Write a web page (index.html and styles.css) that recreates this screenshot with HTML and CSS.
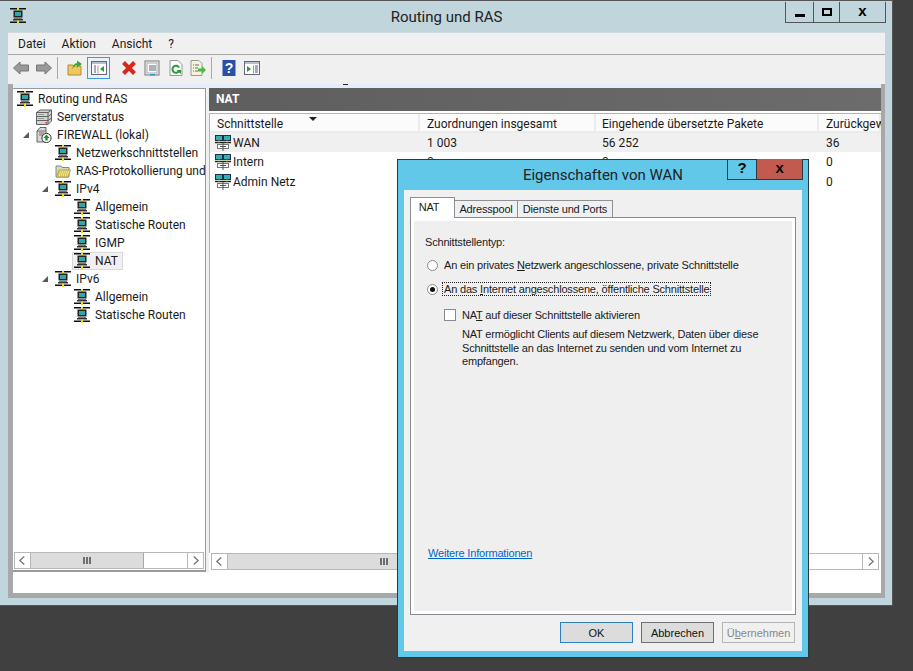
FILE: index.html
```html
<!DOCTYPE html>
<html lang="de">
<head>
<meta charset="utf-8">
<title>Routing und RAS</title>
<link rel="stylesheet" href="styles.css">
</head>
<body>
<svg class="defs" aria-hidden="true">
  <symbol id="net" viewBox="0 0 16 16">
    <rect x="0" y="0" width="16" height="1.500" fill="#111"/>
    <rect x="7" y="0" width="2" height="3" fill="#e8e020"/>
    <rect x="3.500" y="2.500" width="9" height="7" fill="#222"/>
    <rect x="5" y="4" width="6" height="4" fill="#2fa8a8"/>
    <rect x="4" y="10" width="8" height="1" fill="#777"/>
    <rect x="3" y="11" width="10" height="1.500" fill="#333"/>
    <rect x="0" y="13.500" width="16" height="1.500" fill="#111"/>
    <rect x="7" y="12.500" width="2" height="3.500" fill="#e8e020"/>
  </symbol>
  <symbol id="server" viewBox="0 0 16 16">
    <path d="M.5 3.500 4 1h11.500v11L12 15.500H.5z" fill="#d4d4d4" stroke="#555" stroke-width=".9"/>
    <path d="M.5 3.500h11.500l3.500-2.500M12 3.500v12M.5 7.500h11.500M.5 11.500h11.500M12 7.500l3.500-2.500M12 11.500l3.500-2.500" fill="none" stroke="#555" stroke-width=".9"/>
    <rect x="2" y="5" width="6" height="1" fill="#999"/><rect x="2" y="9" width="6" height="1" fill="#999"/>
    <rect x="9.500" y="13" width="1.500" height="1.500" fill="#c33"/>
  </symbol>
  <symbol id="fw" viewBox="0 0 16 16">
    <path d="M1 4 4 .5h6V15H1z" fill="#d8d8d8" stroke="#555" stroke-width=".9"/>
    <path d="M1 4h9M3 6h5M3 8h5" stroke="#555" stroke-width=".8" fill="none"/>
    <circle cx="10.500" cy="11" r="4.600" fill="#fff" stroke="#333"/>
    <path d="M10.500 7.500 13.500 11h-1.800v2.500H9.300V11H7.500z" fill="#1d8f2c"/>
  </symbol>
  <symbol id="folder" viewBox="0 0 16 16">
    <path d="M1 3h5l1 1.500h7V14H1z" fill="#d9d9c0" stroke="#8a8a70"/>
    <path d="M4 7h11.500L13 14H1.500z" fill="#f2e27a" stroke="#8f8f70" stroke-width=".8"/>
    <path d="M4 9h10M3 11h10M3 13h9" stroke="#b9a83a" stroke-dasharray="1 1"/>
  </symbol>
  <symbol id="nic" viewBox="0 0 16 16">
    <rect x=".5" y=".5" width="7" height="5" fill="#35b0b0" stroke="#1c2f4a"/>
    <rect x="8.500" y=".5" width="7" height="5" fill="#35b0b0" stroke="#1c2f4a"/>
    <path d="M0 7.500h16" stroke="#222" stroke-width="1.500"/>
    <path d="M4 5.500v2M12 5.500v2" stroke="#e8e020"/>
    <rect x="2.500" y="9.500" width="11" height="4" fill="#fff" stroke="#777"/>
    <path d="M8 8v8M5 11.500h6" stroke="#555"/>
  </symbol>
  <symbol id="back" viewBox="0 0 16 16">
    <path d="M0.500 8 7 2v3h8.500v6H7v3z" fill="#999" stroke="#777"/>
  </symbol>
  <symbol id="forward" viewBox="0 0 16 16">
    <path d="M15.500 8 9 2v3H.5v6H9v3z" fill="#999" stroke="#777"/>
  </symbol>
  <symbol id="up" viewBox="0 0 16 16">
    <path d="M1 5h5l1 1h7v9H1z" fill="#efc860" stroke="#b08a30"/>
    <path d="M5 9C6 5 8 3 10 3V.5L15 4l-5 3.500V5C8 5 7 7 5 9z" fill="#3aa63a"/>
  </symbol>
  <symbol id="pane-l" viewBox="0 0 16 16">
    <rect x=".5" y="1.500" width="15" height="13" fill="#fff" stroke="#667"/>
    <rect x="1" y="2" width="14" height="2" fill="#b5c0c8"/>
    <path d="M3 6h2M3 8h2M3 10h2M3 12h2" stroke="#557"/>
    <path d="M7 5.500v8" stroke="#99a"/>
    <path d="M13 6v6L9 9z" fill="#2c9a3c"/>
  </symbol>
  <symbol id="pane-r" viewBox="0 0 16 16">
    <rect x=".5" y="1.500" width="15" height="13" fill="#fff" stroke="#667"/>
    <rect x="1" y="2" width="14" height="2" fill="#b5c0c8"/>
    <path d="M11 6h3M11 8h3M11 10h3M11 12h3" stroke="#557"/>
    <path d="M9.500 5.500v8" stroke="#99a"/>
    <path d="M3 6v6l4-3z" fill="#2c9a3c"/>
  </symbol>
  <symbol id="del" viewBox="0 0 16 16">
    <path d="M2.500 2.500 13.500 13.500M13.500 2.500 2.500 13.500" stroke="#d9261c" stroke-width="4"/>
  </symbol>
  <symbol id="props" viewBox="0 0 16 16">
    <rect x="1" y="1" width="14" height="14" fill="#f4f4f4" stroke="#777"/>
    <rect x="3" y="3" width="10" height="10" fill="#fff" stroke="#aaa"/>
    <path d="M5 6h7M5 8h7M5 10h7" stroke="#567"/>
    <rect x="6" y="14" width="5" height="1.500" fill="#39c"/>
  </symbol>
  <symbol id="refresh" viewBox="0 0 16 16">
    <path d="M2 .5h8l4 4v11H2z" fill="#fafafa" stroke="#999"/>
    <path d="M11 7.500A3.500 3.500 0 1 0 11 11" fill="none" stroke="#2a9a3a" stroke-width="2"/>
    <path d="M8.500 10l4.500 0v4z" fill="#2a9a3a"/>
  </symbol>
  <symbol id="export" viewBox="0 0 16 16">
    <path d="M1 .5h8l3 3v12H1z" fill="#f7f3d8" stroke="#999"/>
    <path d="M3 5h1M5 5h4M3 8h1M5 8h3M3 11h1M5 11h3" stroke="#667"/>
    <path d="M8 8.500h4V6l4 4-4 4v-2.500H8z" fill="#4cb84c"/>
  </symbol>
  <symbol id="help" viewBox="0 0 16 16">
    <rect x="1.500" y="0" width="13" height="16" fill="#2a4fa8"/>
    <text x="8" y="13" text-anchor="middle" class="help-q">?</text>
  </symbol>
  <symbol id="left" viewBox="0 0 17 17">
    <path d="M10.500 4 5.500 8.500l5 4.500" fill="none" stroke="#777" stroke-width="1.500"/>
  </symbol>
  <symbol id="right" viewBox="0 0 17 17">
    <path d="M6.500 4l5 4.500-5 4.500" fill="none" stroke="#777" stroke-width="1.500"/>
  </symbol>
</svg>

<main class="window">
  <header class="titlebar">
    <svg class="ico title-ico"><use href="#net"/></svg>
    <h1 class="title">Routing und RAS</h1>
    <div class="caption">
      <span class="cap cap-min"><i class="glyph-min"></i></span>
      <span class="cap cap-max"><i class="glyph-max"></i></span>
      <span class="cap cap-close">x</span>
    </div>
  </header>
  <nav class="menu"><span>Datei</span><span>Aktion</span><span>Ansicht</span><span>?</span></nav>
  <div class="toolbar">
    <svg class="ico"><use href="#back"/></svg>
    <svg class="ico t-fwd"><use href="#forward"/></svg>
    <span class="sep"></span>
    <svg class="ico t-up"><use href="#up"/></svg>
    <span class="active"><svg class="ico"><use href="#pane-l"/></svg></span>
    <svg class="ico t-del"><use href="#del"/></svg>
    <svg class="ico t-props"><use href="#props"/></svg>
    <svg class="ico t-refresh"><use href="#refresh"/></svg>
    <svg class="ico t-export"><use href="#export"/></svg>
    <span class="sep sep2"></span>
    <svg class="ico t-help"><use href="#help"/></svg>
    <svg class="ico t-pane"><use href="#pane-r"/></svg>
  </div>
  <div class="frame">
    <div class="band"></div>
    <div class="panes">
      <section class="tree">
        <ul class="tree-list">
          <li class="node"><svg class="ico"><use href="#net"/></svg>Routing und RAS</li>
          <li class="node l1"><svg class="ico"><use href="#server"/></svg>Serverstatus</li>
          <li class="node l1 open"><svg class="ico"><use href="#fw"/></svg>FIREWALL (lokal)</li>
          <li class="node l2"><svg class="ico"><use href="#net"/></svg>Netzwerkschnittstellen</li>
          <li class="node l2"><svg class="ico"><use href="#folder"/></svg>RAS-Protokollierung und</li>
          <li class="node l2 open"><svg class="ico"><use href="#net"/></svg>IPv4</li>
          <li class="node l3"><svg class="ico"><use href="#net"/></svg>Allgemein</li>
          <li class="node l3"><svg class="ico"><use href="#net"/></svg>Statische Routen</li>
          <li class="node l3"><svg class="ico"><use href="#net"/></svg>IGMP</li>
          <li class="node l3"><span class="selected"><svg class="ico"><use href="#net"/></svg>NAT</span></li>
          <li class="node l2 open"><svg class="ico"><use href="#net"/></svg>IPv6</li>
          <li class="node l3"><svg class="ico"><use href="#net"/></svg>Allgemein</li>
          <li class="node l3"><svg class="ico"><use href="#net"/></svg>Statische Routen</li>
        </ul>
        <div class="hscroll">
          <span class="arrow"><svg class="arrow-ico"><use href="#left"/></svg></span>
          <span class="thumb thumb-tree"><i class="grip"></i></span>
          <span class="track"></span>
          <span class="arrow arrow-end"><svg class="arrow-ico"><use href="#right"/></svg></span>
        </div>
      </section>
      <section class="detail">
        <h2 class="detail-head">NAT</h2>
        <div class="list">
          <div class="row head">
            <span class="c1">Schnittstelle<i class="sort"></i></span>
            <span class="c2">Zuordnungen insgesamt</span>
            <span class="c3">Eingehende übersetzte Pakete</span>
            <span class="c4">Zurückgew</span>
          </div>
          <div class="row hot">
            <span class="c1"><svg class="ico"><use href="#nic"/></svg>WAN</span>
            <span class="c2">1 003</span><span class="c3">56 252</span><span class="c4">36</span>
          </div>
          <div class="row">
            <span class="c1"><svg class="ico"><use href="#nic"/></svg>Intern</span>
            <span class="c2">0</span><span class="c3">0</span><span class="c4">0</span>
          </div>
          <div class="row">
            <span class="c1"><svg class="ico"><use href="#nic"/></svg>Admin Netz</span>
            <span class="c2">0</span><span class="c3">0</span><span class="c4">0</span>
          </div>
        </div>
        <div class="hscroll hscroll-r">
          <span class="arrow"><svg class="arrow-ico"><use href="#left"/></svg></span>
          <span class="thumb thumb-list"><i class="grip"></i></span>
          <span class="track"></span>
          <span class="arrow arrow-end"><svg class="arrow-ico"><use href="#right"/></svg></span>
        </div>
      </section>
    </div>
    <div class="status"></div>
  </div>
</main>

<div class="dialog" role="dialog">
  <header class="dlg-title">
    <h2 class="dlg-name">Eigenschaften von WAN</h2>
    <div class="dlg-caption">
      <span class="dcap">?</span>
      <span class="dcap dcap-close">x</span>
    </div>
  </header>
  <div class="dlg-body">
    <div class="tabs">
      <span class="tab tab-on">NAT</span>
      <span class="tab tab-b">Adresspool</span>
      <span class="tab tab-c">Dienste und Ports</span>
    </div>
    <div class="page">
      <p class="lbl">Schnittstellentyp:</p>
      <label class="opt opt1"><i class="radio"></i><span>An ein privates <u>N</u>etzwerk angeschlossene, private Schnittstelle</span></label>
      <label class="opt opt2"><i class="radio checked"></i><span class="focus">An das <u>I</u>nternet angeschlossene, öffentliche Schnittstelle</span></label>
      <label class="chk"><i class="box"></i><span>NA<u>T</u> auf dieser Schnittstelle aktivieren</span></label>
      <p class="desc">NAT ermöglicht Clients auf diesem Netzwerk, Daten über diese Schnittstelle an das Internet zu senden und vom Internet zu empfangen.</p>
      <a class="more" href="#">Weitere Informationen</a>
    </div>
    <div class="buttons">
      <button class="btn btn-ok">OK</button>
      <button class="btn btn-cancel">Abbrechen</button>
      <button class="btn btn-off">Ü<u>b</u>ernehmen</button>
    </div>
  </div>
</div>
</body>
</html>
```

FILE: styles.css
```css
* { box-sizing: border-box; }
html, body { margin: 0; height: 100%; }
body {
  width: 913px; height: 671px; overflow: hidden; position: relative;
  background: #404040;
  font-family: Roboto, "Open Sans", sans-serif;
  font-size: 12px; color: #1a1a1a;
}
.defs { position: absolute; width: 0; height: 0; }
.help-q { font: bold 14px "Liberation Sans", sans-serif; fill: #fff; }
.ico { width: 16px; height: 16px; flex: none; display: block; }

.window {
  position: absolute; left: 0; top: 0; width: 893px; height: 606px;
  background: #c1d5dc;
  border: 1px solid #555; border-width: 1px 1px 1px 0;
  padding: 0 7px 7px 8px;
  display: flex; flex-direction: column;
}
.titlebar { height: 31px; flex: none; position: relative; display: flex; align-items: flex-start; }
.title-ico { margin: 7px 0 0 2px; }
.title {
  position: absolute; left: 0; right: 0; top: 5px; margin: 0;
  font-size: 15px; font-weight: 400; line-height: 22px; text-align: center; color: #222;
}
.caption {
  position: absolute; right: -1px; top: 1px; height: 21px; width: 101px; display: flex;
  border: 1px solid #555; border-top: 0;
}
.cap { display: flex; align-items: center; justify-content: center; border-left: 1px solid #555; }
.cap:first-child { border-left: 0; }
.cap-min { width: 27px; }
.cap-max { width: 26px; }
.cap-close { flex: 1; font: bold 15px/1 "Liberation Sans", sans-serif; color: #000; padding-bottom: 4px; }
.glyph-min { width: 10px; height: 3px; background: #000; margin-top: 6px; }
.glyph-max { width: 10px; height: 8px; border: 2px solid #000; }

.menu {
  height: 23px; flex: none; display: flex; gap: 16px; align-items: center;
  padding-left: 10px; background: #f0f0f0;
  border-top: 1px solid #d0dadf; border-bottom: 1px solid #a8a8a8;
}
.toolbar { height: 29px; flex: none; display: flex; align-items: center; padding: 0 0 3px 5px; background: #f0f0f0; }
.t-fwd { margin-left: 7px; }
.sep { width: 1px; height: 22px; background: #a8a8a8; margin-left: 5px; }
.t-up { margin-left: 9px; }
.active {
  width: 23px; height: 22px; margin-left: 4px; display: flex; align-items: center; justify-content: center;
  border: 1px solid #3c9ad6; background: #e8f2fa;
}
.t-del { margin-left: 11px; }
.t-props { margin-left: 7px; }
.t-refresh { margin-left: 8px; }
.t-export { margin-left: 6px; }
.sep2 { margin-left: 5px; }
.t-help { margin-left: 9px; }
.t-pane { margin-left: 7px; }

.frame {
  flex: 1; min-height: 0; display: flex; flex-direction: column;
  background: #a8a8a8; padding: 0 4px 5px 5px;
}
.band { height: 4px; flex: none; background: #e4edf8; position: relative; }
.band::after { content: ""; position: absolute; left: 330px; top: 0; width: 5px; height: 1px; background: #222; }
.panes { height: 484px; flex: none; display: flex; background: #f0f0f0; }
.tree {
  width: 193px; flex: none; background: #fff; display: flex; flex-direction: column;
  border: 1px solid #9a9a9a; border-width: 1px 1px 2px 0;
  overflow: hidden;
}
.tree-list { list-style: none; margin: 0; padding: 1px 0 0; flex: 1; min-height: 0; }
.node {
  position: relative; height: 18px; line-height: 18px; white-space: nowrap;
  display: flex; align-items: center; gap: 5px; padding-left: 4px;
}
.l1 { padding-left: 23px; }
.l2 { padding-left: 42px; }
.l3 { padding-left: 61px; }
.open::before {
  content: ""; position: absolute; top: 6px; width: 0; height: 0;
  border-style: solid; border-width: 0 0 6px 6px;
  border-color: transparent transparent #5a5a5a transparent;
}
.l1.open::before { left: 10px; }
.l2.open::before { left: 29px; }
.selected {
  display: flex; align-items: center; gap: 5px; height: 18px; width: 51px;
  margin-left: -2px; padding-left: 1px;
  background: #f0f0f0; border: 1px solid #d9d9d9;
}
.hscroll {
  height: 17px; flex: none; margin: 0 1px 1px; display: flex;
  background: #fff; border: 1px solid #b8b8b8;
}
.arrow { width: 16px; flex: none; display: block; background: #fff; border-right: 1px solid #b8b8b8; }
.arrow-end { border-right: 0; border-left: 1px solid #b8b8b8; }
.arrow-ico { width: 15px; height: 15px; display: block; }
.thumb {
  display: flex; align-items: center; justify-content: center; flex: none;
  background: #dcdcdc; border-right: 1px solid #a8a8a8;
}
.thumb-tree { width: 113px; }
.thumb-list { width: 312px; }
.track { flex: 1; }
.grip { width: 8px; height: 7px; background: repeating-linear-gradient(90deg, #6e6e6e 0 2px, transparent 2px 3px); }

.detail {
  flex: 1; min-width: 0; margin-left: 3px; background: #fff;
  display: flex; flex-direction: column;
}
.detail-head {
  height: 23px; margin: 0; flex: none; padding-left: 7px;
  background: linear-gradient(90deg, #5e5e5e, #6c6c6c);
  color: #fff; font-size: 12px; font-weight: 700; line-height: 23px;
}
.list { flex: 1; min-height: 0; margin-top: 2px; border: 1px solid #b4b4b4; border-width: 1px 0 0 1px; overflow: hidden; }
.row { height: 19px; display: flex; line-height: 18px; padding-top: 1px; white-space: nowrap; }
.row:last-child { padding-top: 2px; }
.row span { flex: none; padding-left: 7px; overflow: hidden; }
.row .c1 { width: 210px; position: relative; display: flex; align-items: center; gap: 2px; padding-left: 5px; }
.row .c2 { width: 176px; }
.row .c3 { width: 223px; padding-left: 6px; }
.row .c4 { width: 62px; }
.head { background: #fff; padding-top: 0; }
.head span { box-shadow: inset -2px -2px 0 #ececec; background: #fbfbfb; padding-top: 1px; line-height: 18px; }
.head .c1 { padding-left: 7px; align-items: flex-start; }
.hot { background: #f0f0f0; }
.sort {
  position: absolute; left: 99px; top: 3px; width: 0; height: 0;
  border: 4px solid transparent; border-top: 4px solid #222; border-bottom: 0;
}
.hscroll-r { margin: 0 2px 2px 2px; }
.status { height: 21px; flex: none; background: #fff; }

.dialog {
  position: absolute; left: 397px; top: 159px; width: 412px; height: 499px;
  background: #62c8ea; border: 1px solid #2c3a40;
  padding: 0 6px 6px; display: flex; flex-direction: column;
  font-family: "Liberation Sans", Arial, sans-serif; font-size: 11px; letter-spacing: -.18px; color: #1a1a1a;
}
.dlg-title { height: 30px; flex: none; position: relative; }
.dlg-name {
  margin: 0; padding-top: 4px; text-align: center; letter-spacing: 0;
  font: 400 15px/22px Roboto, sans-serif; color: #222;
}
.dlg-caption { position: absolute; right: -1px; top: -1px; height: 21px; display: flex; border: 1px solid #2c3a40; border-top: 0; }
.dcap {
  display: flex; align-items: center; justify-content: center; width: 28px;
  font: bold 15px/1 "Liberation Sans", sans-serif; color: #000; padding-bottom: 3px;
}
.dcap-close { width: 46px; background: #c35a50; border-left: 1px solid #2c3a40; }
.dlg-body { flex: 1; min-height: 0; background: #f0f0f0; padding: 7px 6px 0; display: flex; flex-direction: column; }
.tabs { height: 20px; flex: none; display: flex; align-items: flex-end; position: relative; z-index: 1; }
.tab {
  height: 17px; line-height: 16px; text-align: center;
  border: 1px solid #8f8f96; border-bottom: 0; border-left: 0; background: #f0f0f0;
}
.tab-on {
  height: 21px; width: 45px; margin-bottom: -1px; line-height: 18px; background: #fff;
  border-left: 1px solid #8f8f96; padding-right: 7px;
}
.tab-b { width: 63px; }
.tab-c { width: 95px; }
.page {
  height: 398px; flex: none; border: 1px solid #8a8a92;
  box-shadow: inset 0 0 0 3px #fff; background: #efefef;
  display: flex; flex-direction: column; align-items: flex-start;
}
.lbl { margin: 17px 0 0 14px; line-height: 14px; }
.opt { display: flex; align-items: center; margin: 8px 0 0 16px; height: 16px; gap: 6px; white-space: nowrap; }
.opt2 { margin-top: 8px; }
.radio {
  width: 11px; height: 11px; border-radius: 50%; background: #fff; border: 1px solid #8a8a8a; flex: none; position: relative;
}
.checked::after { content: ""; position: absolute; left: 2px; top: 2px; width: 5px; height: 5px; border-radius: 50%; background: #111; }
.focus { outline: 1px dotted #222; padding: 0 1px; margin-left: -1px; }
.chk { display: flex; align-items: center; gap: 6px; margin: 10px 0 0 33px; height: 15px; white-space: nowrap; }
.box { width: 12px; height: 12px; border: 1px solid #8a8a8a; background: #fff; flex: none; }
.desc { margin: 6px 0 0 51px; width: 330px; line-height: 13.5px; }
.more { margin: 178px 0 0 17px; color: #0066cc; text-decoration: underline; }
.buttons { flex: 1; display: flex; justify-content: flex-end; gap: 8px; padding: 7px 1px 0 0; }
.btn {
  width: 73px; height: 21px; padding: 0; font: inherit; letter-spacing: 0; color: #111; background: #dcdcdc;
  border: 1px solid #707070; border-radius: 0;
}
.btn-ok { border-color: #2d7fbd; }
.btn-off { background: #f0f0f0; border-color: #b5b5b5; color: #888; }
```
